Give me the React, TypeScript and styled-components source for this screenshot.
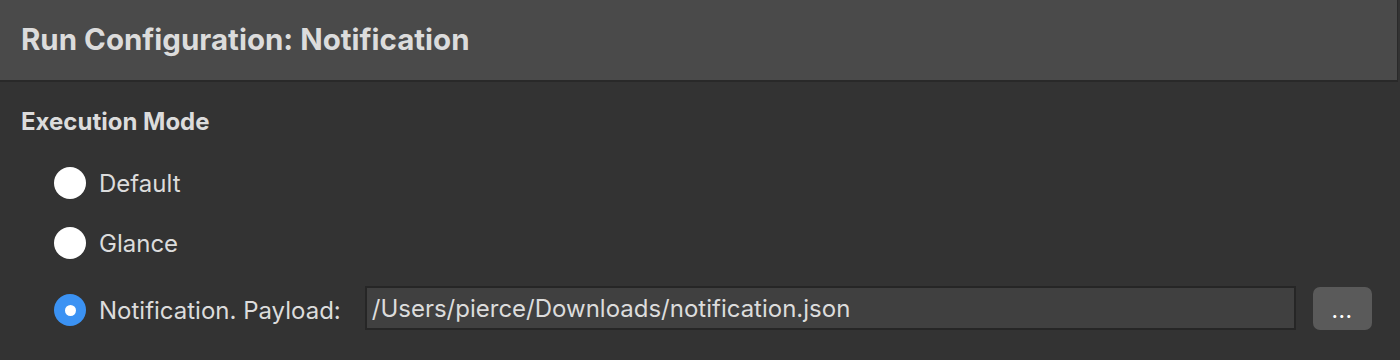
import styled, { createGlobalStyle } from "styled-components"

const Global = createGlobalStyle`
  html, body { margin: 0; padding: 0; background: #333333; }
  body { font-family: Inter, "Noto Sans", "Liberation Sans", sans-serif; color: #dedede; }
`

const Page = styled.div`
  width: 1400px;
  height: 360px;
  background: #333333;
  overflow: hidden;
`

const Header = styled.div`
  width: 1398px;
  height: 82px;
  box-sizing: border-box;
  background: #4a4a4a;
  border-bottom: 2px solid #292929;
  border-right: 1px solid #2a2a2a;
  display: flex;
  align-items: center;
  padding: 0 0 2px 21px;
`

const Title = styled.h1`
  margin: 0;
  font-size: 29.5px;
  font-weight: 700;
  color: #dcdcdc;
  line-height: 36px;
`

const Body = styled.div`
  padding: 26px 28px 0 21px;
`

const SectionTitle = styled.h2`
  margin: 0 0 31px 0;
  font-size: 24px;
  font-weight: 700;
  color: #dcdcdc;
  line-height: 28px;
`

const Options = styled.div`
  display: flex;
  flex-direction: column;
  gap: 28px;
  padding-left: 33px;
`

const Option = styled.label`
  display: flex;
  align-items: center;
  height: 32px;
  font-size: 24px;
  color: #dcdcdc;
  white-space: nowrap;
  flex: none;
`

const PayloadOption = styled(Option)`
  margin-top: 8px;
`

const Radio = styled.span<{ $checked?: boolean }>`
  width: 32px;
  height: 32px;
  border-radius: 50%;
  flex: none;
  box-sizing: border-box;
  background: ${p => (p.$checked ? "#3b92f3" : "#ffffff")};
  display: flex;
  align-items: center;
  justify-content: center;
  margin-right: 13px;
  &::after {
    content: "";
    display: ${p => (p.$checked ? "block" : "none")};
    width: 11px;
    height: 11px;
    border-radius: 50%;
    background: #ffffff;
  }
`

const PathField = styled.div`
  margin-left: 24px;
  width: 931px;
  height: 44px;
  flex: none;
  box-sizing: border-box;
  background: #404040;
  border: 2px solid #262626;
  display: flex;
  align-items: center;
  padding-left: 5px;
  font-size: 24px;
  color: #dcdcdc;
  white-space: nowrap;
`

const BrowseButton = styled.button`
  margin: 1px 0 0 17px;
  width: 59px;
  height: 43px;
  flex: none;
  border: none;
  border-radius: 7px;
  background: #5a5a5a;
  color: #ffffff;
  font-family: inherit;
  font-size: 18px;
  font-weight: 700;
  padding-top: 6px;
  letter-spacing: 1px;
`

const PayloadRow = styled.div`
  display: flex;
  align-items: flex-start;
  height: 44px;
  margin-top: -1px;
`

export default function App() {
  return (
    <>
      <Global />
      <Page>
        <Header>
          <Title>Run Configuration: Notification</Title>
        </Header>
        <Body>
          <SectionTitle>Execution Mode</SectionTitle>
          <Options>
            <Option><Radio />Default</Option>
            <Option><Radio />Glance</Option>
            <PayloadRow>
              <PayloadOption><Radio $checked />Notification. Payload:</PayloadOption>
              <PathField>/Users/pierce/Downloads/notification.json</PathField>
              <BrowseButton>...</BrowseButton>
            </PayloadRow>
          </Options>
        </Body>
      </Page>
    </>
  )
}
